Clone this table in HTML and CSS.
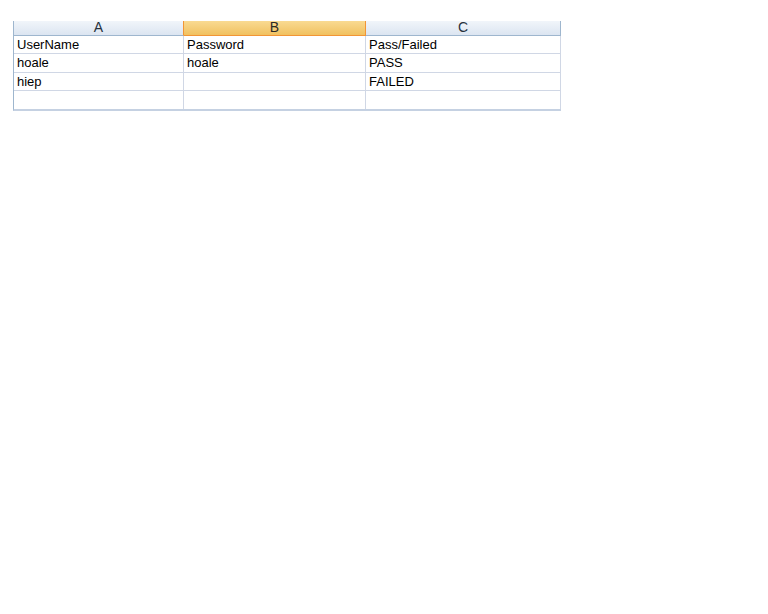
FILE: index.html
```html
<!DOCTYPE html>
<html>
<head>
<meta charset="utf-8">
<link rel="stylesheet" href="styles.css">
</head>
<body>
<div class="sheet">
  <div class="hdr colA">A</div>
  <div class="hdr colB sel">B</div>
  <div class="hdr colC">C</div>

  <div class="cell r1">UserName</div>
  <div class="cell r1">Password</div>
  <div class="cell r1">Pass/Failed</div>

  <div class="cell r2">hoale</div>
  <div class="cell r2">hoale</div>
  <div class="cell r2">PASS</div>

  <div class="cell r3">hiep</div>
  <div class="cell r3"></div>
  <div class="cell r3">FAILED</div>

  <div class="cell r4"></div>
  <div class="cell r4"></div>
  <div class="cell r4"></div>
</div>
</body>
</html>
```

FILE: styles.css
```css
html, body {
  margin: 0;
  padding: 0;
  background: #ffffff;
}

.sheet {
  margin: 21px 0 0 13px;
  display: grid;
  grid-template-columns: 170px 182px 195px;
  grid-template-rows: 15px 18px 19px 18px 18px;
  width: 547px;
  border-left: 1px solid #9eb6ce;
  border-bottom: 2px solid #c5d1e2;
  font-family: "Liberation Sans", Arial, sans-serif;
  font-size: 13px;
  color: #000;
}

.hdr {
  box-sizing: border-box;
  text-align: center;
  line-height: 12px;
  font-size: 14px;
  color: #27313d;
  background: linear-gradient(#f1f5fa, #dce5f1);
  border-right: 1px solid #c3cfdf;
  border-bottom: 1px solid #9eb6ce;
}

.hdr.colC {
  border-right-color: #9eb6ce;
}

.hdr.sel {
  background: linear-gradient(#f9da92, #f1c160);
  border-right: 1px solid #f29536;
  border-bottom: 1px solid #f29536;
  color: #2b2a26;
}

.colA.hdr {
  border-right-color: #f29536;
}

.cell {
  box-sizing: border-box;
  padding: 0 0 0 3px;
  line-height: 18px;
  border-right: 1px solid #d0d7e5;
  border-bottom: 1px solid #d0d7e5;
  white-space: nowrap;
  overflow: hidden;
}

.r4 {
  border-bottom: none;
}
```
